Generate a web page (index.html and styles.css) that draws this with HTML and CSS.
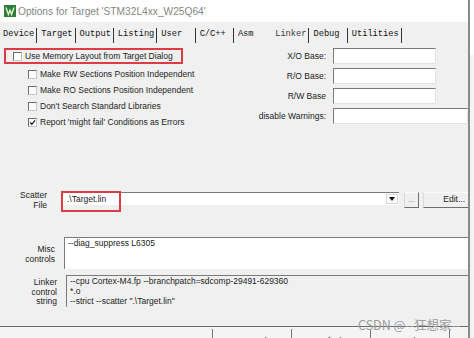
FILE: index.html
```html
<!DOCTYPE html>
<html lang="en">
<head>
    <meta charset="UTF-8">
    <title>Options for Target</title>
    <link rel="stylesheet" href="styles.css">
</head>
<body>
    <div class="window">
        <div class="dialog">
            <div class="titlebar">
                <svg class="app-icon" viewBox="0 0 12 12">
                    <rect width="12" height="12" fill="#2f7d3b"/>
                    <path d="M2 2.5 L4.4 9.5 L6 5.2 L7.6 9.5 L10 2.5" fill="none" stroke="#dff3cf" stroke-width="1.4"/>
                </svg>
                <span>Options for Target 'STM32L4xx_W25Q64'</span>
            </div>

            <div class="tabs">
                <span class="tab">Device</span>
                <span class="tab">Target</span>
                <span class="tab">Output</span>
                <span class="tab">Listing</span>
                <span class="tab">User  </span>
                <span class="tab">C/C++ </span>
                <span class="tab plain">Asm   </span>
                <span class="tab active">Linker</span>
                <span class="tab">Debug </span>
                <span class="tab">Utilities</span>
            </div>

            <div class="page">
                <div class="top">
                    <div class="options">
                        <div class="check-row highlight">
                            <span class="checkbox"></span>
                            <span>Use Memory Layout from Target Dialog</span>
                        </div>
                        <div class="sub-options">
                            <div class="check-row">
                                <span class="checkbox"></span>
                                <span>Make RW Sections Position Independent</span>
                            </div>
                            <div class="check-row">
                                <span class="checkbox"></span>
                                <span>Make RO Sections Position Independent</span>
                            </div>
                            <div class="check-row">
                                <span class="checkbox"></span>
                                <span>Don't Search Standard Libraries</span>
                            </div>
                            <div class="check-row">
                                <span class="checkbox">
                                    <svg viewBox="0 0 7 7"><path d="M1 3.4 L2.8 5.3 L6 1.3" fill="none" stroke="#1a1a1a" stroke-width="1.3"/></svg>
                                </span>
                                <span>Report 'might fail' Conditions as Errors</span>
                            </div>
                        </div>
                    </div>

                    <div class="bases">
                        <span class="base-label">X/O Base:</span>
                        <div class="field"></div>
                        <span class="base-label">R/O Base:</span>
                        <div class="field"></div>
                        <span class="base-label">R/W Base</span>
                        <div class="field"></div>
                        <span class="base-label">disable Warnings:</span>
                        <div class="field wide"></div>
                    </div>
                </div>

                <div class="scatter">
                    <div class="scatter-label">Scatter<br>File</div>
                    <div class="combo">
                        <span>.\Target.lin</span>
                        <span class="drop"><span class="arrow"></span></span>
                        <span class="mark"></span>
                    </div>
                    <div class="btn dots">...</div>
                    <div class="btn edit">Edit...</div>
                </div>

                <div class="misc">
                    <div class="misc-label">Misc<br>controls</div>
                    <div class="textbox">--diag_suppress L6305</div>
                </div>

                <div class="control">
                    <div class="control-label">Linker<br>control<br>string</div>
                    <div class="textbox readonly">--cpu Cortex-M4.fp --branchpatch=sdcomp-29491-629360<br>*.o<br>--strict --scatter ".\Target.lin"</div>
                </div>
            </div>

            <div class="footer">
                <div class="footer-btn">OK</div>
                <div class="footer-btn">Cancel</div>
                <div class="footer-btn">Defaults</div>
                <div class="footer-btn">Help</div>
            </div>
        </div>
        <div class="edge"></div>
        <div class="outside"></div>
    </div>

    <div class="watermark">CSDN @--狂想家--</div>
</body>
</html>
```

FILE: styles.css
```css
/* Global */
* {
    box-sizing: border-box;
}

body {
    margin: 0;
    height: 338px;
    overflow: hidden;
    position: relative;
    font-family: "Liberation Sans", Arial, sans-serif;
    font-size: 8.5px;
    color: #1c1c1c;
    background: #fff;
}

.window {
    display: flex;
    height: 338px;
}

.dialog {
    width: 468px;
    height: 338px;
    overflow: hidden;
    background: #f0f0f0;
}

.edge {
    width: 2px;
    background: #8a8a8a;
}

.outside {
    flex: 1;
    background: linear-gradient(#fff 55px, #f3f3f3 55px);
}

/* Title bar */
.titlebar {
    height: 22px;
    display: flex;
    align-items: center;
    gap: 2px;
    padding-left: 4px;
    background: #fff;
    color: #858585;
    font-size: 10.2px;
}

.app-icon {
    width: 12px;
    height: 12px;
}

/* Tabs */
.tabs {
    height: 21px;
    display: flex;
    padding: 6px 0 0 3px;
    font-family: "Liberation Mono", monospace;
    font-size: 8.7px;
    line-height: 12px;
    white-space: pre;
    color: #111;
}

.tab {
    padding: 0 2px 0 4px;
    border-right: 1px solid #333;
}

.tab:first-child {
    padding-left: 0;
}

.tab.plain {
    border-right: none;
}

.tab.active {
    color: #3a3a3a;
}

/* Page */
.page {
    padding: 5px 0 19px 4px;
}

.top {
    display: flex;
}

.options {
    display: flex;
    flex-direction: column;
    gap: 2px;
}

.check-row {
    display: flex;
    align-items: center;
    gap: 3px;
    height: 16px;
}

.highlight {
    width: 179px;
    padding-left: 7px;
    border: 2px solid #dc3c44;
}

.sub-options {
    padding-left: 24px;
}

.checkbox {
    width: 9px;
    height: 9px;
    display: flex;
    background: #fff;
    border: 1px solid;
    border-color: #6d6d6d #c4c4c4 #c4c4c4 #6d6d6d;
}

.checkbox svg {
    width: 7px;
    height: 7px;
}

.bases {
    margin-left: auto;
    width: 212px;
    display: grid;
    grid-template-columns: 1fr 135px;
    grid-auto-rows: 16px;
    column-gap: 7px;
    row-gap: 4px;
    align-items: center;
}

.base-label {
    text-align: right;
}

.field {
    width: 103px;
    height: 16px;
    background: #fff;
    border: 1px solid;
    border-color: #7a7a7a #e3e3e3 #e3e3e3 #7a7a7a;
}

.field.wide {
    width: 100%;
}

/* Scatter file */
.scatter {
    display: flex;
    margin-top: 60px;
}

.scatter-label {
    width: 43px;
    margin-right: 15px;
    text-align: right;
    line-height: 10px;
}

.combo {
    position: relative;
    width: 337px;
    height: 13px;
    margin-top: 2px;
    display: flex;
    align-items: center;
    padding-left: 4px;
    background: #fff;
    border-top: 1px solid #7a7a7a;
    border-left: 1px solid #7a7a7a;
}

.drop {
    margin-left: auto;
    margin-right: 1px;
    width: 12px;
    height: 10px;
    display: flex;
    align-items: center;
    justify-content: center;
    border: 1px solid #d6d6d6;
}

.arrow {
    border-left: 3px solid transparent;
    border-right: 3px solid transparent;
    border-top: 4px solid #111;
}

.mark {
    position: absolute;
    left: -2px;
    top: -2px;
    width: 60px;
    height: 21px;
    border: 2px solid #dc3c44;
}

.btn {
    height: 16px;
    margin-top: 2px;
    background: #f0f0f0;
    border: 1px solid;
    border-color: #fafafa #6e6e6e #6e6e6e #d8d8d8;
    line-height: 13px;
}

.dots {
    width: 15px;
    margin-left: 5px;
    text-align: center;
    color: #8a8a8a;
}

.edit {
    flex: 1;
    margin-left: 4px;
    padding-right: 3px;
    text-align: right;
    border-right: none;
}

/* Misc and linker control */
.misc,
.control {
    display: flex;
}

.misc {
    margin-top: 27px;
}

.control {
    margin-top: 6px;
}

.misc-label {
    width: 51px;
    margin-right: 9px;
    padding-top: 7px;
    text-align: right;
    line-height: 10px;
}

.control-label {
    width: 53px;
    margin-right: 9px;
    padding-top: 3px;
    text-align: right;
    line-height: 9.5px;
}

.textbox {
    flex: 1;
    height: 32px;
    padding: 0 3px;
    line-height: 10px;
    white-space: nowrap;
    background: #fff;
    border-top: 1px solid #7a7a7a;
    border-left: 1px solid #7a7a7a;
}

.textbox.readonly {
    background: #f0f0f0;
}

/* Bottom buttons */
.footer {
    display: flex;
    gap: 3px;
    padding: 2px 0 0 137px;
    background: #f4f4f4;
    border-top: 1px solid #6a6a6a;
}

.footer-btn {
    width: 76px;
    height: 22px;
    padding-top: 7px;
    line-height: 10px;
    text-align: center;
    border-right: 1px solid #777;
}

.watermark {
    position: absolute;
    left: 358px;
    top: 318px;
    font-family: "Noto Sans CJK SC", sans-serif;
    font-size: 12.5px;
    line-height: 14px;
    color: #9c9c9c;
}
```
